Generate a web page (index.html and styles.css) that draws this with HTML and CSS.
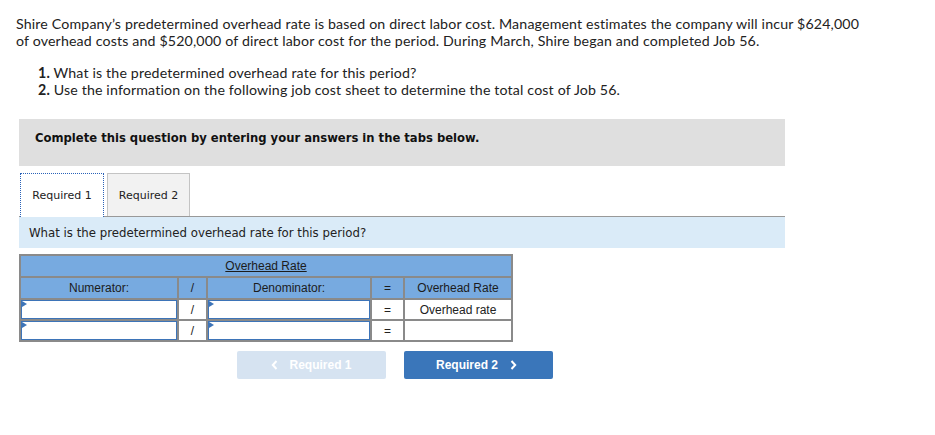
FILE: index.html
```html
<!DOCTYPE html>
<html>
<head>
<meta charset="utf-8">
<link rel="stylesheet" href="styles.css">
</head>
<body>
<div class="page">
  <p class="intro">Shire Company’s predetermined overhead rate is based on direct labor cost. Management estimates the company will incur $624,000 of overhead costs and $520,000 of direct labor cost for the period. During March, Shire began and completed Job 56.</p>
  <ol class="reqs">
    <li><b>1.</b> What is the predetermined overhead rate for this period?</li>
    <li><b>2.</b> Use the information on the following job cost sheet to determine the total cost of Job 56.</li>
  </ol>
  <div class="notice">Complete this question by entering your answers in the tabs below.</div>
  <div class="tabs">
    <div class="tab active">Required 1</div>
    <div class="tab">Required 2</div>
  </div>
  <div class="prompt">What is the predetermined overhead rate for this period?</div>
  <table class="rate">
    <colgroup>
      <col class="c-num"><col class="c-op"><col class="c-den"><col class="c-eq"><col class="c-res">
    </colgroup>
    <tr class="h1"><th colspan="5"><u>Overhead Rate</u></th></tr>
    <tr class="h2"><th>Numerator:</th><th>/</th><th>Denominator:</th><th>=</th><th>Overhead Rate</th></tr>
    <tr class="r1"><td class="in"><span class="box"></span></td><td class="op">/</td><td class="in"><span class="box"></span></td><td class="op">=</td><td class="res">Overhead rate</td></tr>
    <tr class="r2"><td class="in"><span class="box"></span></td><td class="op">/</td><td class="in"><span class="box"></span></td><td class="op">=</td><td class="res"></td></tr>
  </table>
  <div class="nav">
    <div class="btn prev"><svg class="chev" width="7" height="10" viewBox="0 0 7 10"><path d="M5.5 1 L1.8 5 L5.5 9" fill="none" stroke="#fff" stroke-width="2"/></svg><span>Required 1</span></div>
    <div class="btn next"><span>Required 2</span><svg class="chev" width="7" height="10" viewBox="0 0 7 10"><path d="M1.5 1 L5.2 5 L1.5 9" fill="none" stroke="#fff" stroke-width="2"/></svg></div>
  </div>
</div>
</body>
</html>
```
FILE: styles.css
```css
html, body { margin: 0; padding: 0; background: #fff; }
.page { padding: 15px 0 0 16px; width: 919px; }
.intro {
  margin: 0; width: 850px;
  font-family: Lato, "Liberation Sans", sans-serif; font-size: 14.2px; letter-spacing: 0.15px; line-height: 17px; color: #222;
}
.reqs {
  list-style: none; margin: 15px 0 0 22px; padding: 0;
  font-family: Lato, "Liberation Sans", sans-serif; font-size: 14.2px; letter-spacing: 0.15px; line-height: 17px; color: #222;
}
.reqs b { font-weight: 700; }
.notice {
  margin: 21px 0 0 3px; width: 766px; height: 47px; box-sizing: border-box;
  background: #dfdfdf; padding: 11px 0 0 16px;
  font-family: "DejaVu Sans", Verdana, sans-serif; font-weight: bold; font-size: 11.6px; line-height: 16px; color: #111;
}
.tabs {
  margin: 7px 0 0 3px; width: 766px; display: flex; gap: 3px;
  border-bottom: 1px solid #999; height: 43px; box-sizing: content-box;
}
.tab {
  width: 83px; height: 43px; box-sizing: border-box;
  display: flex; align-items: center; justify-content: center;
  font-family: "DejaVu Sans", Verdana, sans-serif; font-size: 11px; color: #222;
  background: #f2f2f2; border: 1px solid #c4c4c4; border-bottom: none;
}
.tab.active {
  width: 84px; margin-left: 1px; background: #fff;
  border: 1px dotted #2a62b8; border-bottom: none;
  margin-bottom: -1px; height: 44px;
}
.prompt {
  margin: 0 0 0 3px; width: 766px; height: 31px; box-sizing: border-box;
  background: #daebf8; padding: 1px 0 0 10px; display: flex; align-items: center;
  font-family: "DejaVu Sans", Verdana, sans-serif; font-size: 11.75px; color: #222;
}
.rate {
  margin: 6px 0 0 3px; border-collapse: collapse; table-layout: fixed; width: 492px;
  font-family: "Liberation Sans", Arial, sans-serif; font-size: 12px; color: #222;
}
.c-num { width: 158px; } .c-op { width: 29px; } .c-den { width: 164px; } .c-eq { width: 33px; } .c-res { width: 108px; }
.rate th, .rate td { border: 2px solid #8a8a8a; padding: 0; text-align: center; }
.rate th { background: #77aae0; font-weight: normal; color: #1c1c1c; }
.rate .h1 th { height: 19px; padding-bottom: 1px; }
.rate .h2 th { height: 19px; padding-bottom: 1px; }
.rate .r1 td, .rate .r2 td { height: 19px; background: #fff; }
.box {
  display: block; height: 19px; box-sizing: border-box; border: 1px solid #3d74b8; position: relative;
}
.box::before {
  content: ""; position: absolute; left: 0; top: 0;
  border-left: 5px solid #3d74b8; border-top: 3px solid transparent; border-bottom: 3px solid transparent;
}
.nav { margin: 9px 0 0 221px; display: flex; gap: 18px; }
.btn {
  width: 149px; height: 28px; border-radius: 2px; box-sizing: border-box;
  display: flex; align-items: center; justify-content: center; gap: 12px;
  font-family: "Liberation Sans", Arial, sans-serif; font-weight: bold; font-size: 12px; color: #fff;
}
.btn.prev { background: #d6e3f1; gap: 11px; }
.btn.next { background: #3a76ba; padding-right: 4px; }
.chev { display: block; }
```
